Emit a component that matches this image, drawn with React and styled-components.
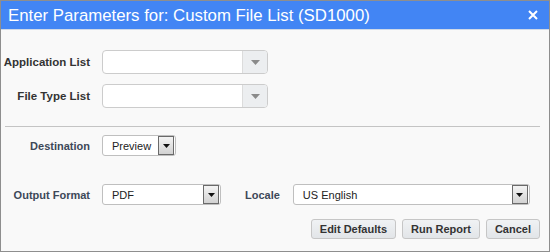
import React from "react";
import styled, { createGlobalStyle } from "styled-components";

const Global = createGlobalStyle`
  html, body { margin: 0; padding: 0; background: #ffffff; }
  body { font-family: "Liberation Sans", Arial, sans-serif; }
  * { box-sizing: border-box; }
`;

const Dialog = styled.div`
  width: 550px;
  height: 252px;
  border: 1px solid #8e8e8e;
  background: #f9f9f9;
  display: flex;
  flex-direction: column;
`;

const TitleBar = styled.div`
  height: 29px;
  background: #4285f4;
  border-bottom: 1px solid #cfd9e8;
  display: flex;
  align-items: center;
  justify-content: space-between;
  padding: 0 11px 0 7px;
  color: #ffffff;
`;

const Title = styled.div`
  font-size: 16.8px;
  line-height: 20px;
  padding-top: 1px;
`;

const CloseButton = styled.button`
  border: 0;
  background: transparent;
  padding: 0;
  width: 11px;
  height: 12px;
  display: flex;
  align-items: center;
  justify-content: center;
  cursor: pointer;
`;

const Body = styled.div`
  flex: 1;
  display: flex;
  flex-direction: column;
  padding: 20px 9px 0 2px;
`;

const FieldRow = styled.div`
  display: grid;
  grid-template-columns: 87px auto;
  column-gap: 12px;
  align-items: center;
  margin-top: ${(p) => p.$top || 0}px;
`;

const InlineFields = styled.div`
  display: flex;
  align-items: center;
`;

const Label = styled.label`
  text-align: right;
  font-weight: bold;
  font-size: ${(p) => p.$size || 11}px;
  color: ${(p) => p.$color || "#333333"};
  white-space: nowrap;
  margin-left: ${(p) => p.$left || 0}px;
  margin-right: ${(p) => p.$right || 0}px;
`;

const ComboBox = styled.div`
  width: 166px;
  height: 24px;
  border: 1px solid #cccccc;
  border-radius: 4px;
  background: #ffffff;
  display: flex;
  overflow: hidden;
`;

const ComboInput = styled.div`
  flex: 1;
`;

const ComboArrow = styled.div`
  width: 25px;
  background: #eceef0;
  border-left: 1px solid #dcdcdc;
  display: flex;
  align-items: center;
  justify-content: center;
`;

const Separator = styled.div`
  height: 1px;
  background: #c4c4c4;
  margin: 18px 0 8px 2px;
`;

const OldSelect = styled.div`
  width: ${(p) => p.$width}px;
  height: 21px;
  border: 1px solid #bfbfbf;
  border-radius: 3px;
  background: #ffffff;
  display: flex;
  align-items: center;
  padding: 1px;
`;

const OldValue = styled.div`
  flex: 1;
  font-size: 11px;
  color: #222222;
  padding-left: 8px;
  white-space: nowrap;
`;

const OldButton = styled.div`
  width: 16px;
  height: 19px;
  border: 1px solid #6a6a6a;
  background: linear-gradient(#f4f4f4, #d2d2d2);
  display: flex;
  align-items: center;
  justify-content: center;
`;

const ButtonBar = styled.div`
  display: flex;
  justify-content: flex-end;
  gap: 6px;
  margin-top: 14px;
`;

const Button = styled.button`
  height: 20px;
  padding: 0 8px;
  border: 1px solid #c6c6c6;
  border-radius: 3px;
  background: linear-gradient(#f0f2f4, #e2e5e8);
  font-family: "Liberation Sans", Arial, sans-serif;
  font-weight: bold;
  font-size: 11px;
  color: #333333;
  cursor: pointer;
`;

const GrayArrow = () => (
  <svg width="9" height="5" viewBox="0 0 9 5">
    <polygon points="0,0 9,0 4.5,5" fill="#8a8a8a" />
  </svg>
);

const BlackArrow = () => (
  <svg width="7" height="4" viewBox="0 0 7 4">
    <polygon points="0,0 7,0 3.5,4" fill="#111111" />
  </svg>
);

const Combo = () => (
  <ComboBox>
    <ComboInput />
    <ComboArrow>
      <GrayArrow />
    </ComboArrow>
  </ComboBox>
);

const Select = ({ width, value }) => (
  <OldSelect $width={width}>
    <OldValue>{value}</OldValue>
    <OldButton>
      <BlackArrow />
    </OldButton>
  </OldSelect>
);

const bottomLabel = "#3d4858";

export default function App() {
  return (
    <>
      <Global />
      <Dialog>
        <TitleBar>
          <Title>Enter Parameters for: Custom File List (SD1000)</Title>
          <CloseButton aria-label="Close">
            <svg width="10" height="10" viewBox="0 0 10 10">
              <path d="M1 1 L9 9 M9 1 L1 9" stroke="#ffffff" strokeWidth="2" />
            </svg>
          </CloseButton>
        </TitleBar>
        <Body>
          <FieldRow>
            <Label $size={11.5}>Application List</Label>
            <Combo />
          </FieldRow>
          <FieldRow $top={10}>
            <Label $size={11.5}>File Type List</Label>
            <Combo />
          </FieldRow>
          <Separator />
          <FieldRow>
            <Label $color={bottomLabel}>Destination</Label>
            <Select width={74} value="Preview" />
          </FieldRow>
          <FieldRow $top={28}>
            <Label $color={bottomLabel}>Output Format</Label>
            <InlineFields>
              <Select width={119} value="PDF" />
              <Label $color={bottomLabel} $left={24} $right={13}>
                Locale
              </Label>
              <Select width={237} value="US English" />
            </InlineFields>
          </FieldRow>
          <ButtonBar>
            <Button>Edit Defaults</Button>
            <Button>Run Report</Button>
            <Button>Cancel</Button>
          </ButtonBar>
        </Body>
      </Dialog>
    </>
  );
}
